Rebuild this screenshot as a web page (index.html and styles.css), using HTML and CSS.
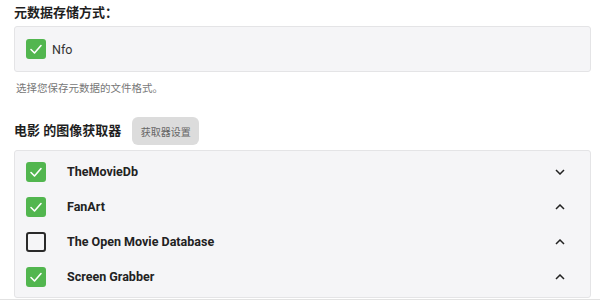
FILE: index.html
```html
<!DOCTYPE html>
<html lang="zh">
<head>
<meta charset="utf-8">
<link rel="stylesheet" href="styles.css">
</head>
<body>
<div class="page">
  <h3 class="heading">元数据存储方式：</h3>
  <div class="panel single">
    <label class="check-row">
      <span class="cb on"><svg viewBox="0 0 20 20"><polyline points="5,10.5 8.5,14 15,6.5"/></svg></span>
      <span class="nfo">Nfo</span>
    </label>
  </div>
  <p class="help">选择您保存元数据的文件格式。</p>
  <div class="title-row">
    <h3 class="heading">电影 的图像获取器</h3>
    <button class="btn">获取器设置</button>
  </div>
  <div class="panel list">
    <div class="item">
      <span class="cb on"><svg viewBox="0 0 20 20"><polyline points="5,10.5 8.5,14 15,6.5"/></svg></span>
      <span class="name">TheMovieDb</span>
      <svg class="chev" viewBox="0 0 10 6"><polyline points="1,1 5,5 9,1"/></svg>
    </div>
    <div class="item">
      <span class="cb on"><svg viewBox="0 0 20 20"><polyline points="5,10.5 8.5,14 15,6.5"/></svg></span>
      <span class="name">FanArt</span>
      <svg class="chev" viewBox="0 0 10 6"><polyline points="1,5 5,1 9,5"/></svg>
    </div>
    <div class="item">
      <span class="cb off"></span>
      <span class="name">The Open Movie Database</span>
      <svg class="chev" viewBox="0 0 10 6"><polyline points="1,5 5,1 9,5"/></svg>
    </div>
    <div class="item">
      <span class="cb on"><svg viewBox="0 0 20 20"><polyline points="5,10.5 8.5,14 15,6.5"/></svg></span>
      <span class="name">Screen Grabber</span>
      <svg class="chev" viewBox="0 0 10 6"><polyline points="1,5 5,1 9,5"/></svg>
    </div>
  </div>
</div>
<div class="rule"></div>
</body>
</html>
```
FILE: styles.css
```css
html, body {
  margin: 0;
  padding: 0;
  background: #ffffff;
  font-family: Roboto, "Noto Sans CJK SC", sans-serif;
  color: #222;
}
.page {
  padding: 3px 9px 0 14px;
}
.heading {
  margin: 0;
  font-size: 13px;
  line-height: 20px;
  font-weight: 700;
  color: #1f1f1f;
}
.panel {
  background: #f5f5f7;
  border: 1px solid #e4e4e6;
  border-radius: 3px;
}
.single {
  margin-top: 3px;
  padding: 12px 11px;
}
.check-row {
  display: flex;
  align-items: center;
  gap: 6px;
}
.cb {
  width: 20px;
  height: 20px;
  box-sizing: border-box;
  border-radius: 3px;
  flex: none;
  display: flex;
}
.cb.on {
  background: #52b64f;
}
.cb.off {
  border: 2px solid #2a2a2a;
  background: transparent;
}
.cb svg {
  width: 20px;
  height: 20px;
}
.cb polyline {
  fill: none;
  stroke: #fff;
  stroke-width: 1.6;
  stroke-linecap: round;
  stroke-linejoin: round;
}
.nfo {
  font-size: 12.5px;
  color: #333;
}
.help {
  margin: 9px 0 0 2px;
  font-size: 10.5px;
  line-height: 16px;
  color: #777;
}
.title-row {
  display: flex;
  align-items: center;
  gap: 11px;
  margin-top: 20px;
}
.btn {
  height: 28px;
  width: 67px;
  padding: 0;
  border: none;
  border-radius: 6px;
  background: #dcdcdc;
  color: #666;
  font-family: "Noto Sans CJK SC", sans-serif;
  font-size: 10px;
}
.list {
  margin-top: 5px;
  padding: 3px 0;
}
.item {
  height: 35px;
  display: flex;
  align-items: center;
  padding: 0 25px 0 11px;
}
.name {
  margin-left: 21px;
  flex: 1;
  font-size: 12.5px;
  font-weight: 700;
  color: #222;
}
.chev {
  width: 10px;
  height: 6px;
}
.chev polyline {
  fill: none;
  stroke: #222;
  stroke-width: 1.5;
}
.rule {
  margin-top: 1px;
  height: 1px;
  background: #e2e2e2;
}
```
